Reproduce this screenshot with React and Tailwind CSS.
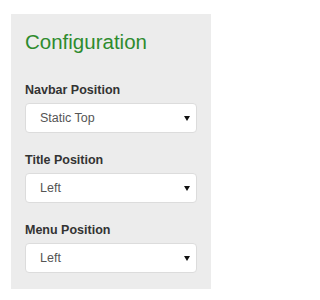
import React from "react";

const sections = [
  { label: "Navbar Position", value: "Static Top" },
  { label: "Title Position", value: "Left" },
  { label: "Menu Position", value: "Left" },
];

// ── Fake select box ─────────────────────────────
function SelectBox({ value }) {
  return (
    <div className="h-[30px] bg-white border border-[#dcdcdc] rounded-[4px] flex items-center justify-between pl-[14px] pr-[6px]">
      <span className="text-[12.5px] text-[#555555]">{value}</span>
      <svg width="6" height="5" viewBox="0 0 6 5" className="mt-[1px]">
        <polygon points="0,0 6,0 3,5" fill="#111111" />
      </svg>
    </div>
  );
}

export default function App() {
  return (
    <div className="bg-white min-h-screen pt-[14px] pl-[11px]" style={{ fontFamily: '"Liberation Sans", Arial, sans-serif' }}>
      <div className="w-[200px] bg-[#ececec] px-[14px] pt-[16px] pb-[16px]">
        <h3 className="text-[20.5px] leading-[24px] text-[#2e8b2e]">Configuration</h3>
        <div className="mt-[28px]">
          {sections.map((s, i) => (
            <div key={i} className={i > 0 ? "mt-[19px]" : ""}>
              <div className="text-[12.5px] leading-[16px] font-bold text-[#333333] mb-[5px]">{s.label}</div>
              <SelectBox value={s.value} />
            </div>
          ))}
        </div>
      </div>
    </div>
  );
}
